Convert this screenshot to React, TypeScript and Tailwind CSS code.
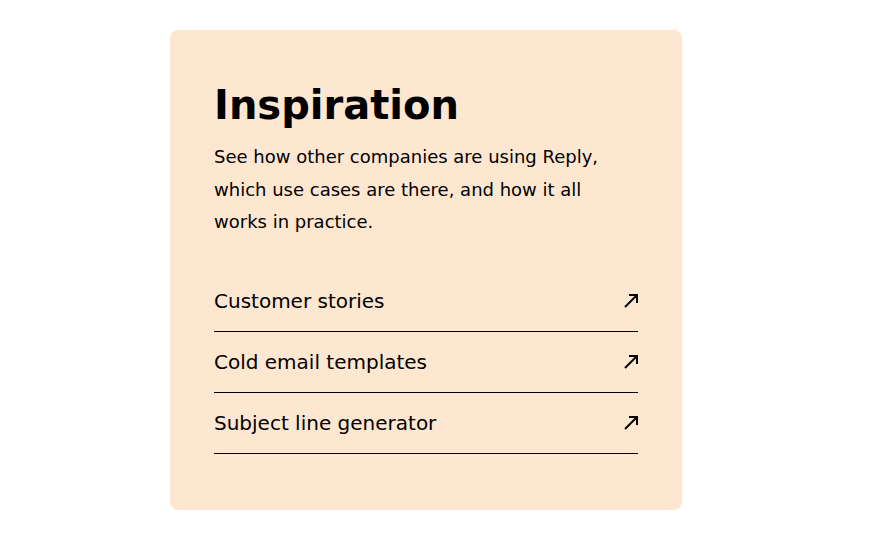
import React from "react";

const Arrow = () => (
  <svg width="14" height="14" viewBox="0 0 14 14" fill="none" stroke="#000" strokeWidth="2" strokeLinecap="butt">
    <path d="M1 13 L12.5 1.5" />
    <path d="M5 1 H13 V9" />
  </svg>
);

const items = ["Customer stories", "Cold email templates", "Subject line generator"];

export default function App() {
  return (
    <div className="w-[869px] h-[557px] bg-white pt-[30px] pl-[170px]" style={{ fontFamily: '"DejaVu Sans", sans-serif' }}>
      <div className="w-[512px] h-[480px] rounded-lg bg-[#fde7d1] px-[44px] pt-[51px] text-black">
        <h1 className="text-[40px] font-bold leading-[48px]">Inspiration</h1>
        <p className="mt-[12px] text-[18px] leading-[32.5px]">
          See how other companies are using Reply, which use cases are there, and how it all works in practice.
        </p>
        <div className="mt-[32px]">
          {items.map((t) => (
            <div key={t} className="flex h-[61px] items-center justify-between border-b border-black pt-px">
              <span className="text-[20px]">{t}</span>
              <Arrow />
            </div>
          ))}
        </div>
      </div>
    </div>
  );
}
